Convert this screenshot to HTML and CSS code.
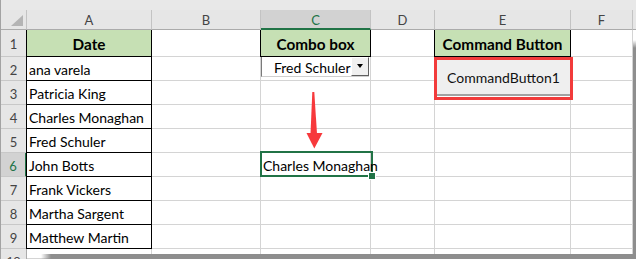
FILE: index.html
```html
<!DOCTYPE html>
<html>
<head>
<meta charset="utf-8">
<link rel="stylesheet" href="styles.css">
</head>
<body>
<div class="sheet">
  <div class="band"></div>

  <div class="ch corner"><span class="tri"></span></div>
  <div class="ch">A</div>
  <div class="ch">B</div>
  <div class="ch sel">C</div>
  <div class="ch">D</div>
  <div class="ch">E</div>
  <div class="ch">F</div>
  <div class="ch last"></div>

  <div class="rh">1</div>
  <div class="c colA hdr">Date</div>
  <div class="c"></div>
  <div class="c boxed hdr">Combo box</div>
  <div class="c"></div>
  <div class="c boxed hdr">Command Button</div>
  <div class="c"></div>
  <div class="c last"></div>

  <div class="rh">2</div>
  <div class="c colA">ana varela</div>
  <div class="c"></div>
  <div class="c combo-cell">
    <div class="combo">
      <span class="combo-text">Fred Schuler</span>
      <span class="combo-btn"><span class="caret"></span></span>
    </div>
  </div>
  <div class="c"></div>
  <div class="c"></div>
  <div class="c"></div>
  <div class="c last"></div>

  <div class="rh">3</div>
  <div class="c colA">Patricia King</div>
  <div class="c"></div><div class="c"></div><div class="c"></div><div class="c"></div><div class="c"></div><div class="c last"></div>

  <div class="rh">4</div>
  <div class="c colA">Charles Monaghan</div>
  <div class="c"></div><div class="c"></div><div class="c"></div><div class="c"></div><div class="c"></div><div class="c last"></div>

  <div class="rh">5</div>
  <div class="c colA">Fred Schuler</div>
  <div class="c"></div><div class="c"></div><div class="c"></div><div class="c"></div><div class="c"></div><div class="c last"></div>

  <div class="rh sel">6</div>
  <div class="c colA">John Botts</div>
  <div class="c"></div>
  <div class="c active"><span class="active-text">Charles Monaghan</span></div>
  <div class="c"></div><div class="c"></div><div class="c"></div><div class="c last"></div>

  <div class="rh">7</div>
  <div class="c colA">Frank Vickers</div>
  <div class="c"></div><div class="c"></div><div class="c"></div><div class="c"></div><div class="c"></div><div class="c last"></div>

  <div class="rh">8</div>
  <div class="c colA">Martha Sargent</div>
  <div class="c"></div><div class="c"></div><div class="c"></div><div class="c"></div><div class="c"></div><div class="c last"></div>

  <div class="rh">9</div>
  <div class="c colA">Matthew Martin</div>
  <div class="c"></div><div class="c"></div><div class="c"></div><div class="c"></div><div class="c"></div><div class="c last"></div>

  <div class="rh partial">10</div>
  <div class="c"></div><div class="c"></div><div class="c"></div><div class="c"></div><div class="c"></div><div class="c"></div><div class="c last"></div>

  <div class="button-frame">
    <div class="cmd-btn">CommandButton1</div>
  </div>

  <svg class="arrow" width="26" height="64" viewBox="0 0 26 64">
    <path d="M11.3 4 L13.3 4 L16 46 L9.5 46 Z" fill="#f7393c"/>
    <path d="M5.5 45 L21.5 45 L13.3 60.5 Z" fill="#f7393c"/>
  </svg>

  <div class="selection"></div>
  <div class="fill-handle"></div>

  <div class="shadow-right"></div>
  <div class="shadow-bottom"></div>
</div>
</body>
</html>
```

FILE: styles.css
```css
* { box-sizing: border-box; }

html, body {
  margin: 0;
  padding: 0;
  background: #ffffff;
}

.sheet {
  position: relative;
  width: 636px;
  height: 259px;
  overflow: hidden;
  display: grid;
  grid-template-columns: 26px 125px 109px 110px 64px 136px 62px 3px;
  grid-template-rows: 10px 20px 27px repeat(8, 24px) 10px;
  border-left: 1px solid #a3a3a3;
  font-family: "Lato", "Liberation Sans", sans-serif;
  font-size: 14px;
  color: #000;
  background: #fff;
}

.band {
  grid-column: 1 / -1;
  background: #e8e8e8;
}

.ch {
  background: #e6e6e6;
  border-right: 1px solid #c3c3c3;
  border-bottom: 1px solid #ababab;
  color: #444;
  font-size: 13px;
  display: flex;
  align-items: center;
  justify-content: center;
  padding-top: 1px;
}

.ch.sel {
  background: #d2d2d2;
  color: #217346;
  border-bottom: 2px solid #217346;
}

.ch.last { border-right: none; }

.corner {
  justify-content: flex-end;
  align-items: flex-end;
  padding: 0 3px 3px 0;
}

.tri {
  width: 12px;
  height: 11px;
  background: #b4b4b4;
  clip-path: polygon(100% 0, 100% 100%, 0 100%);
}

.rh {
  background: #e6e6e6;
  border-right: 1px solid #ababab;
  border-bottom: 1px solid #c8c8c8;
  color: #444;
  font-size: 13px;
  display: flex;
  align-items: center;
  justify-content: center;
  padding-top: 2px;
}

.rh.sel {
  background: #d2d2d2;
  color: #217346;
  border-right: 2px solid #217346;
}

.rh.partial {
  align-items: flex-start;
  padding-top: 4px;
  border-bottom: none;
  font-size: 12px;
}

.c {
  border-right: 1px solid #d4d4d4;
  border-bottom: 1px solid #d4d4d4;
  display: flex;
  align-items: center;
  padding: 2px 0 0 2px;
  white-space: nowrap;
}

.c.last { border-right: none; }

.colA {
  border-right-color: #000;
  border-bottom-color: #000;
  box-shadow: -1px 0 0 #000;
}

.boxed {
  border-right-color: #000;
  border-bottom-color: #000;
  box-shadow: -1px 0 0 #000;
}

.hdr {
  background: #c6e0b4;
  font-weight: bold;
  font-size: 15.3px;
  justify-content: center;
  padding: 2px 0 0 0;
}

.combo-cell {
  align-items: flex-start;
  padding: 0;
}

.combo {
  width: 108px;
  height: 20px;
  display: flex;
  background: #fff;
  border-left: 1px solid #7a7a7a;
  border-bottom: 1px solid #cfcfcf;
}

.combo-text {
  flex: 1;
  padding: 1px 0 0 12px;
  display: flex;
  align-items: center;
  overflow: hidden;
}

.combo-btn {
  width: 18px;
  height: 19px;
  background: #f0f0f0;
  border-top: 1px solid #fff;
  border-left: 1px solid #fff;
  border-right: 1px solid #5f5f5f;
  border-bottom: 1px solid #5f5f5f;
  display: flex;
  justify-content: center;
  padding-top: 6px;
}

.caret {
  width: 0;
  height: 0;
  border-left: 3.5px solid transparent;
  border-right: 3.5px solid transparent;
  border-top: 4px solid #000;
}

.active {
  padding-left: 2px;
}

.active-text {
  position: relative;
  z-index: 3;
}

.button-frame {
  position: absolute;
  left: 433px;
  top: 57px;
  width: 139px;
  height: 43px;
  border: 3px solid #f23b3b;
  background: #fff;
  z-index: 2;
  display: flex;
  flex-direction: column;
}

.cmd-btn {
  flex: 1;
  background: #efefef;
  border-bottom: 2px solid #a2a2a2;
  margin-bottom: 1px;
  display: flex;
  align-items: center;
  justify-content: center;
  padding-top: 1px;
  color: #111;
}

.arrow {
  position: absolute;
  left: 300px;
  top: 88px;
  z-index: 2;
}

.selection {
  position: absolute;
  left: 259px;
  top: 151px;
  width: 113px;
  height: 26px;
  border: 2px solid #217346;
  z-index: 2;
}

.fill-handle {
  position: absolute;
  left: 367px;
  top: 172px;
  width: 8px;
  height: 8px;
  background: #217346;
  border: 1px solid #fff;
  z-index: 2;
}

.shadow-right {
  position: absolute;
  right: 0;
  top: 40px;
  width: 3px;
  bottom: 0;
  background: linear-gradient(to bottom, rgba(140,140,140,0), #8e8e8e 8px);
  z-index: 4;
}

.shadow-bottom {
  position: absolute;
  left: 40px;
  right: 0;
  bottom: 0;
  height: 5px;
  background: linear-gradient(to right, rgba(140,140,140,0), #8e8e8e 10px);
  z-index: 4;
}
```
